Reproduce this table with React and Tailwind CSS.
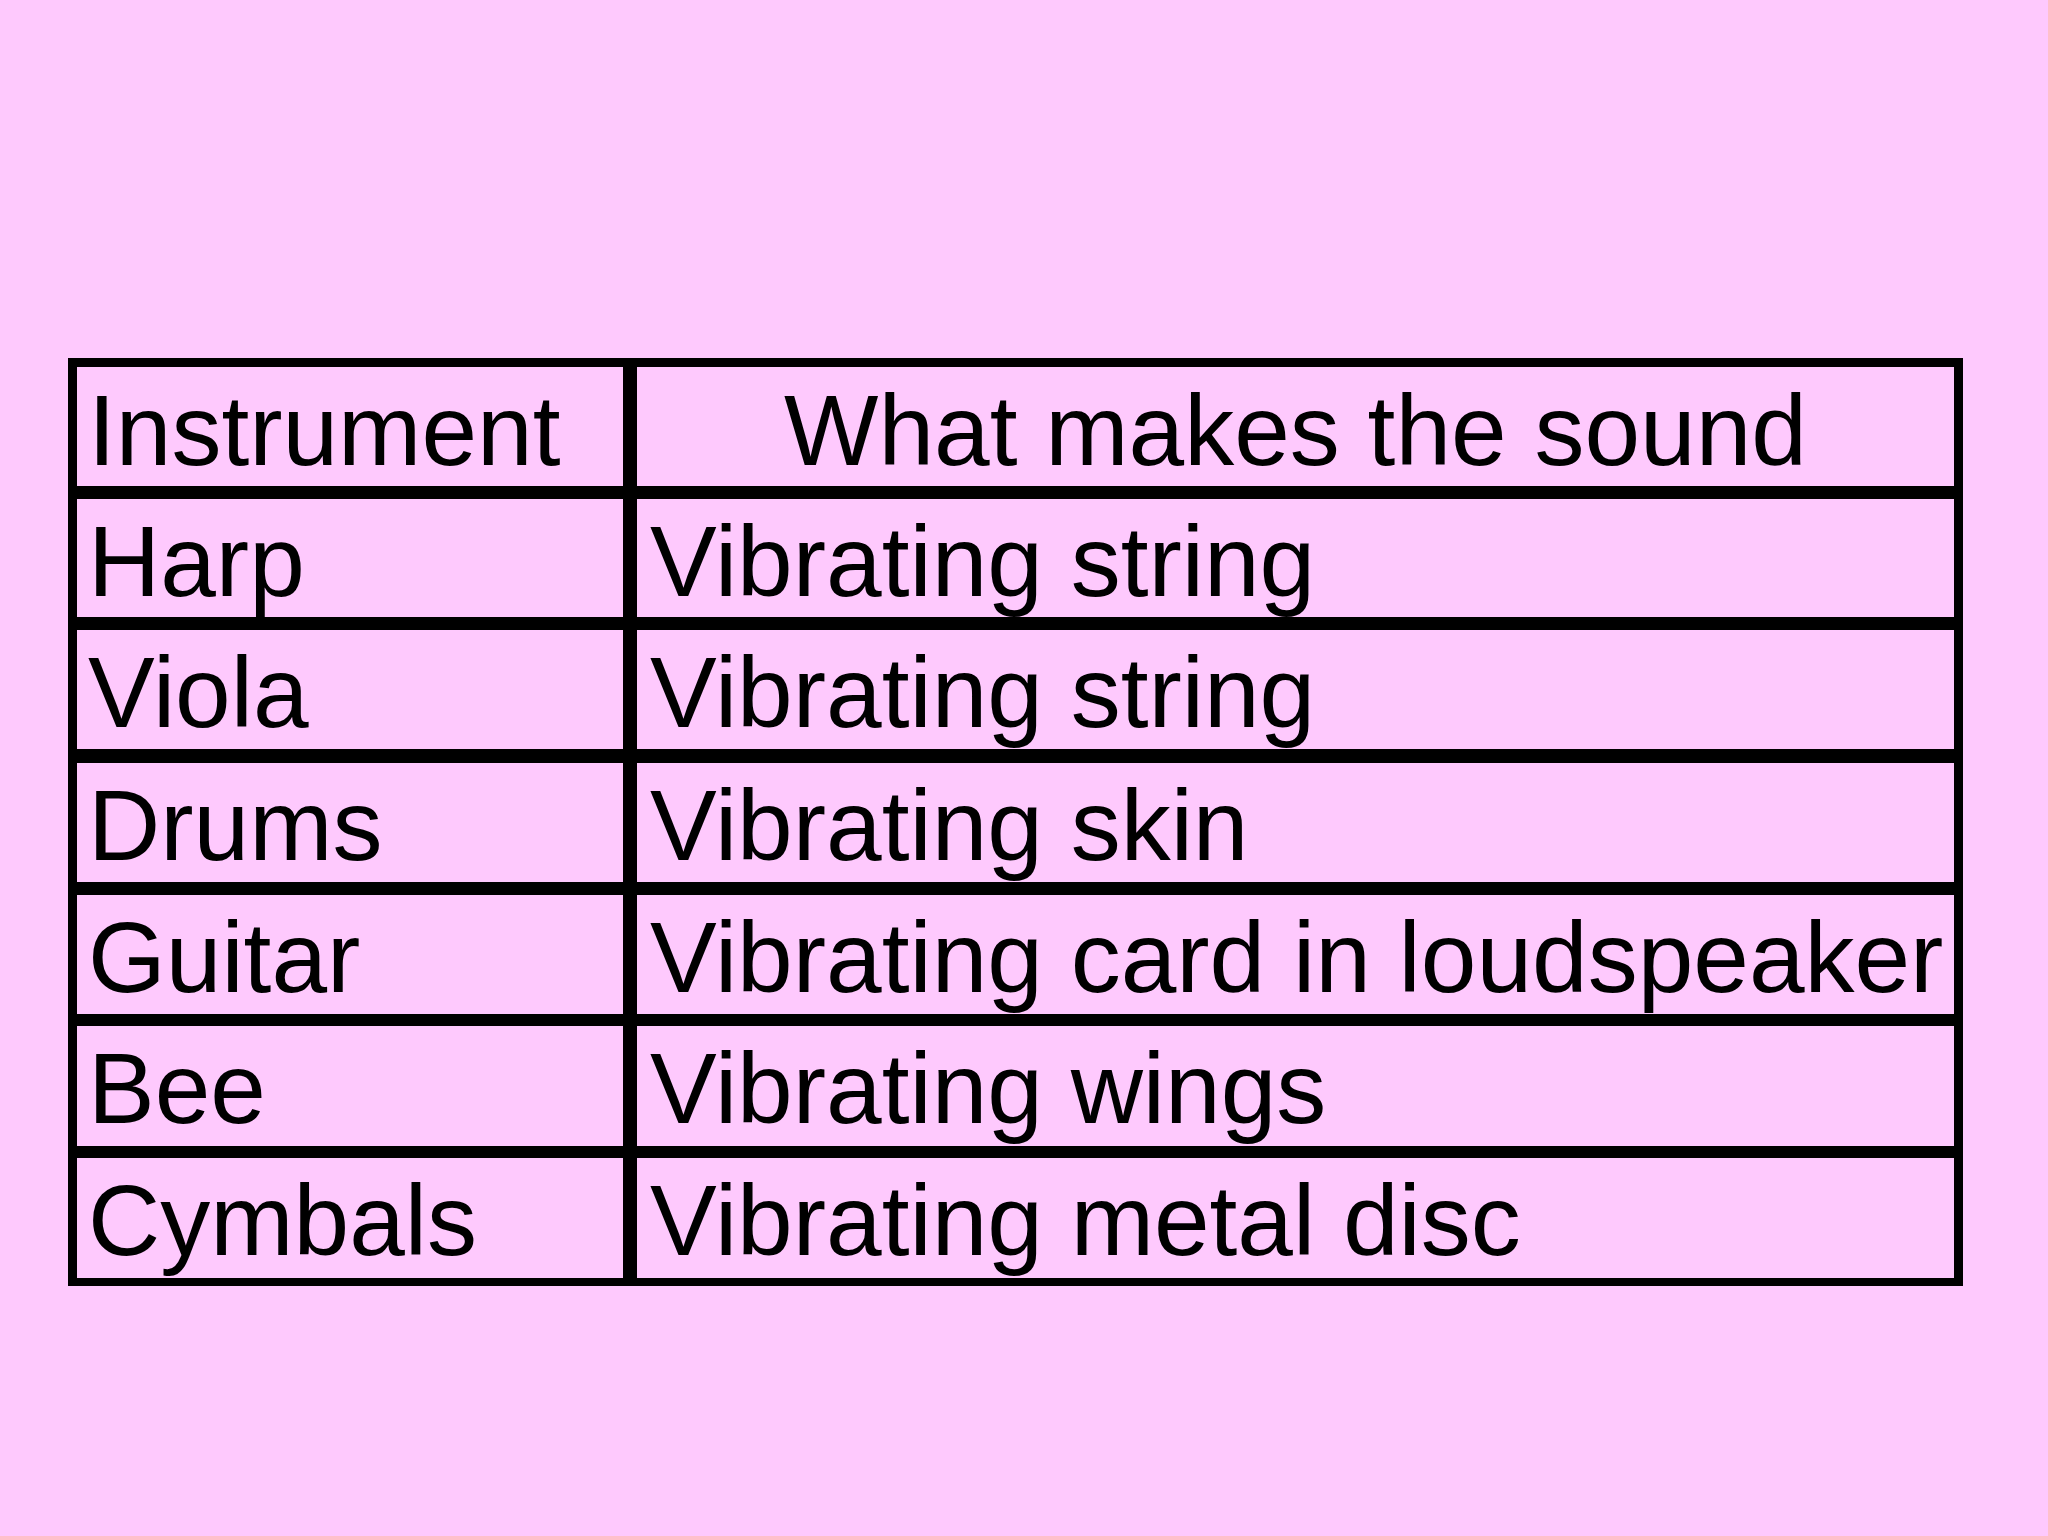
const rows = [
  { name: 'Harp', what: 'Vibrating string', h: 118 },
  { name: 'Viola', what: 'Vibrating string', h: 119 },
  { name: 'Drums', what: 'Vibrating skin', h: 119 },
  { name: 'Guitar', what: 'Vibrating card in loudspeaker', h: 119 },
  { name: 'Bee', what: 'Vibrating wings', h: 120 },
  { name: 'Cymbals', what: 'Vibrating metal disc', h: 120 },
]

// thickness of the rule above each body row
const rules = [13, 13, 14, 13, 12, 12]

function Row({ name, what, h, header }) {
  return (
    <div className="flex" style={{ height: h }}>
      <div className={`w-[546px] pl-[11px] leading-[115px] whitespace-nowrap ${header ? 'pt-[6px]' : 'pt-[5px]'}`}>
        {name}
      </div>
      <div className="w-[14px] bg-black" />
      <div
        className={`flex-1 leading-[115px] whitespace-nowrap ${
          header ? 'pt-[6px] text-center' : 'pt-[5px] pl-[13px]'
        }`}
      >
        {what}
      </div>
    </div>
  )
}

export default function App() {
  return (
    <div
      className="w-[2048px] h-[1536px] bg-[#fec9fd] text-black text-[100px] overflow-hidden pt-[358px] pl-[68px]"
      style={{ fontFamily: '"Liberation Sans", Arial, sans-serif' }}
    >
      <div className="w-[1895px] border-black border-t-[9px] border-l-[9px] border-r-[9px] border-b-[8px]">
        <Row name="Instrument" what="What makes the sound" h={119} header />
        {rows.map((r, i) => (
          <div key={i}>
            <div className="bg-black" style={{ height: rules[i] }} />
            <Row {...r} />
          </div>
        ))}
      </div>
    </div>
  )
}
